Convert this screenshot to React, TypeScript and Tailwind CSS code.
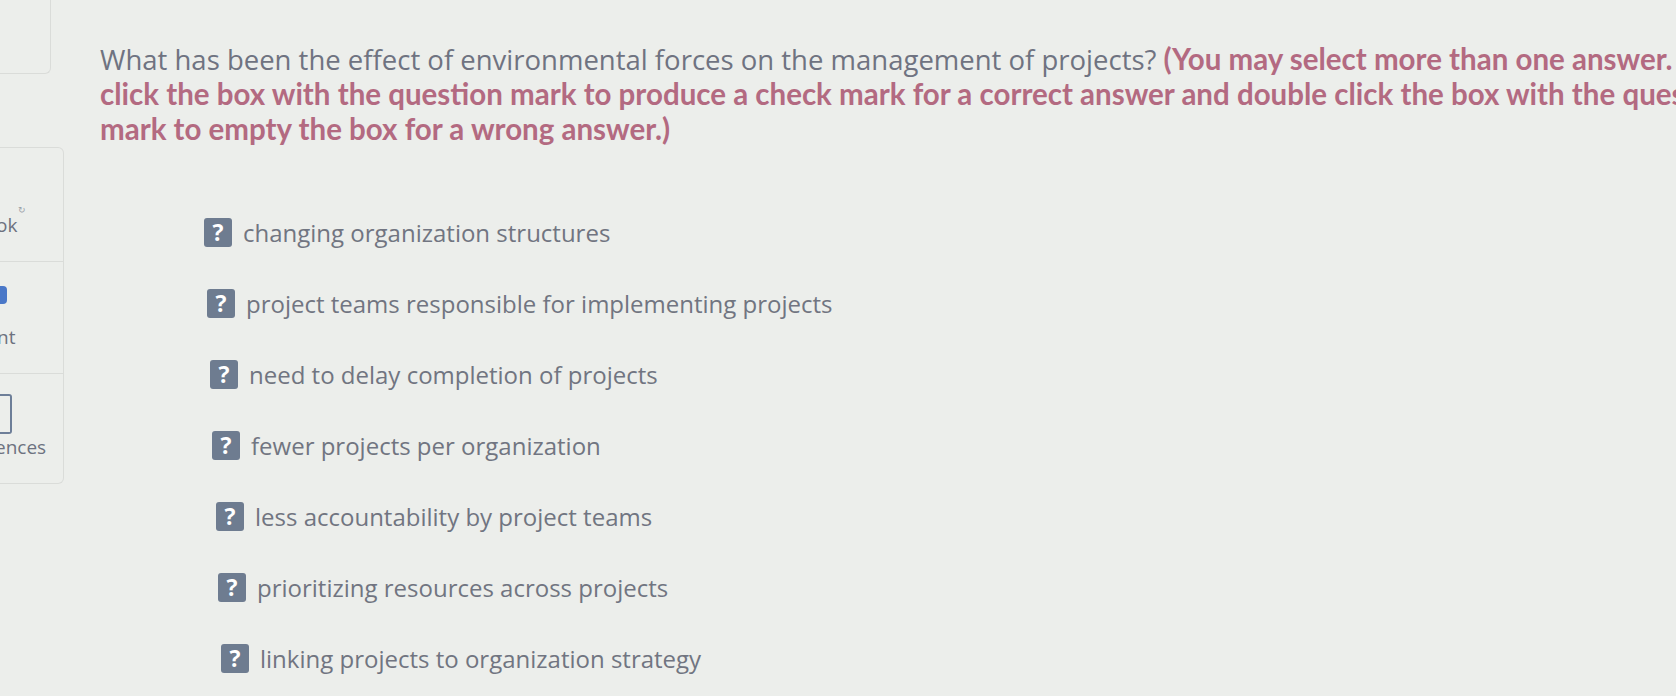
import React from 'react';

const options = [
  { text: 'changing organization structures', shift: 'ml-[0px]' },
  { text: 'project teams responsible for implementing projects', shift: 'ml-[3px]' },
  { text: 'need to delay completion of projects', shift: 'ml-[6px]' },
  { text: 'fewer projects per organization', shift: 'ml-[8px]' },
  { text: 'less accountability by project teams', shift: 'ml-[12px]' },
  { text: 'prioritizing resources across projects', shift: 'ml-[14px]' },
  { text: 'linking projects to organization strategy', shift: 'ml-[17px]' },
];

const App: React.FC = () => {
  return (
    <div
      className="relative h-[696px] w-[1676px] overflow-hidden bg-[#eceeeb]"
      style={{ fontFamily: '"Open Sans", Lato, Arial, sans-serif' }}
    >
      {/* Side navigation, mostly off-screen */}
      <div className="absolute left-0 top-0 flex flex-col">
        <div className="h-[74px] w-[51px] rounded-br-md border-b border-r border-[#dadcd9]"></div>
        <div className="mt-[73px] flex w-[64px] flex-col rounded-r-md border border-l-0 border-[#dadcd9]">
          <div className="flex h-[113px] flex-col items-start justify-end pb-[26px] text-[19px] text-[#6d7280]">
            <span className="mb-[2px] ml-[18px] text-[9px] leading-none text-[#9aa0a8]">↻</span>
            <span className="-ml-[4px] leading-none">ok</span>
          </div>
          <div className="flex h-[112px] flex-col items-start justify-end border-t border-[#dadcd9] pb-[26px] text-[19px] text-[#6d7280]">
            <span className="mb-[24px] h-[18px] w-[7px] rounded-r-sm bg-[#4a78c8]"></span>
            <span className="-ml-[3px] leading-none">nt</span>
          </div>
          <div className="flex h-[110px] flex-col items-start justify-end border-t border-[#dadcd9] pb-[26px] text-[19px] text-[#6d7280]">
            <span className="mb-[4px] h-[40px] w-[12px] rounded-r-[3px] border-2 border-l-0 border-[#6d7e98]"></span>
            <span className="-ml-[5px] leading-none">ences</span>
          </div>
        </div>
      </div>

      {/* Question */}
      <div className="pl-[100px] pt-[42px]">
        <p className="whitespace-nowrap text-[27.5px] leading-[34px] text-[#6f7381]">
          What has been the effect of environmental forces on the management of projects?{' '}
          <span
            className="text-[29.5px] font-bold text-[#b36a81]"
            style={{ fontFamily: 'Lato, "Open Sans", Arial, sans-serif' }}
          >
            (You may select more than one answer.
            <br />
            click the box with the question mark to produce a check mark for a correct answer and double click the box with the question
            <br />
            mark to empty the box for a wrong answer.)
          </span>
        </p>

        <ul className="mt-[71px] flex flex-col gap-[42px] pl-[104px]">
          {options.map((o) => (
            <li key={o.text} className={`flex items-center gap-[11px] ${o.shift}`}>
              <button className="flex h-[29px] w-[28px] items-center justify-center rounded-[3px] bg-[#6e7c90] text-[23px] font-bold leading-none text-white">
                ?
              </button>
              <span className="text-[24px] leading-[29px] text-[#717581]">{o.text}</span>
            </li>
          ))}
        </ul>
      </div>
    </div>
  );
};

export default App;
